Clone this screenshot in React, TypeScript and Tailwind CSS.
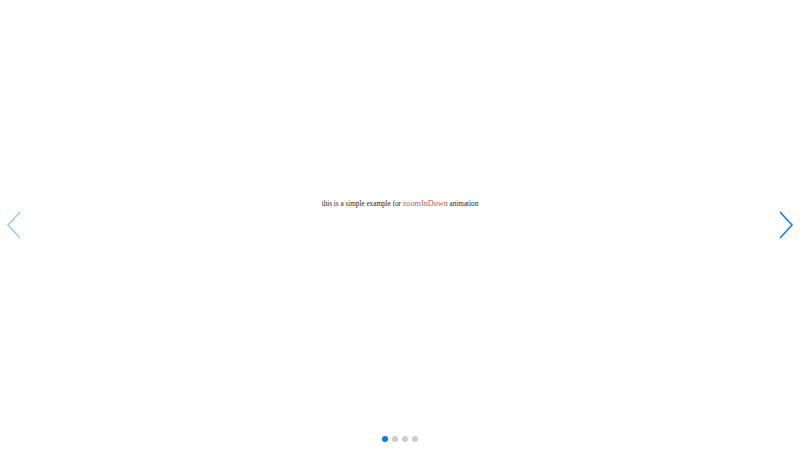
export default function App() {
  return (
    <div className="relative w-[800px] h-[450px] bg-white overflow-hidden" style={{ fontFamily: '"Liberation Serif", serif' }}>
      <div className="flex h-full w-full items-center justify-center">
        <p className="-mt-[41px] text-[7.2px] text-[#222] whitespace-nowrap">
          this is a simple example for <span className="text-[8.2px] text-[#b25b5b]">zoomInDown</span> animation
        </p>
      </div>
      <button className="absolute left-[6px] top-[211px] opacity-40">
        <svg width="16" height="28" viewBox="0 0 16 28" fill="none" stroke="#007aff" strokeWidth="1.5">
          <path d="M14 1 L2 14 L14 27" />
        </svg>
      </button>
      <button className="absolute right-[6px] top-[211px]">
        <svg width="16" height="28" viewBox="0 0 16 28" fill="none" stroke="#007aff" strokeWidth="1.5">
          <path d="M2 1 L14 14 L2 27" />
        </svg>
      </button>
      <div className="absolute left-0 right-0 top-[436px] flex justify-center gap-[4px]">
        <span className="h-[6px] w-[6px] rounded-full bg-[#007aff]" />
        <span className="h-[6px] w-[6px] rounded-full bg-black opacity-20" />
        <span className="h-[6px] w-[6px] rounded-full bg-black opacity-20" />
        <span className="h-[6px] w-[6px] rounded-full bg-black opacity-20" />
      </div>
    </div>
  );
}
